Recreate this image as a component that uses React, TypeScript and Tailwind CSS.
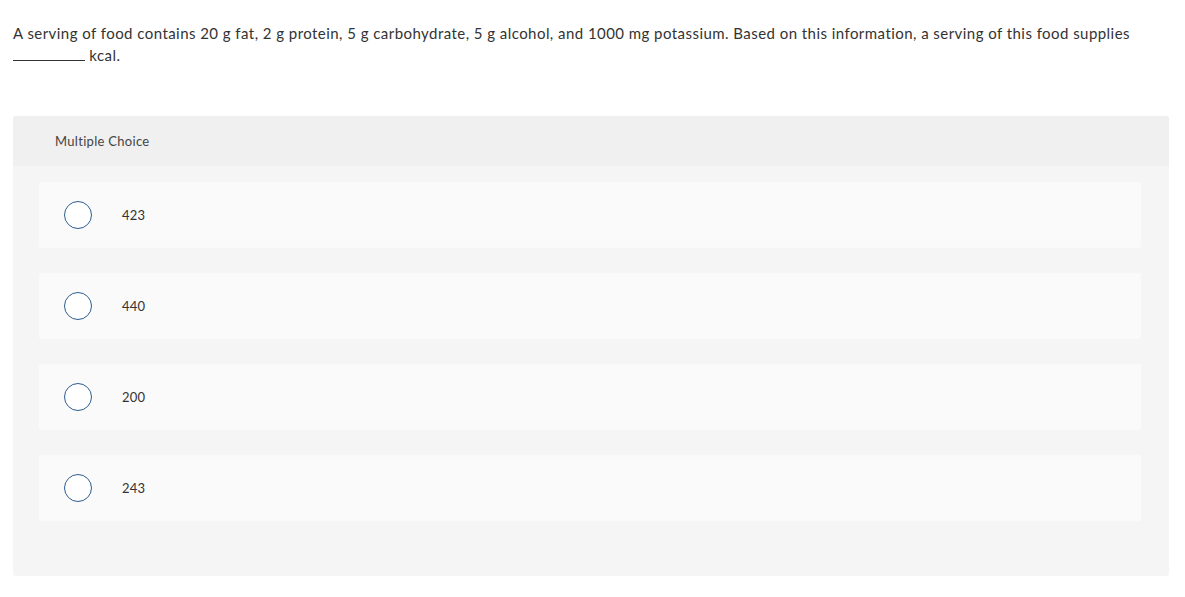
const choices = ['423', '440', '200', '243']

function ChoiceRow({ label }: { label: string }) {
  return (
    <div className="flex h-[66px] items-center rounded-[2px] bg-[#fafafa] pl-[25px]">
      <span className="h-[28px] w-[28px] shrink-0 rounded-full border-[1.5px] border-[#2d5d8f] bg-white" />
      <span className="ml-[30px] pt-[2px] text-[13px] tracking-[0.2px] text-[#333]">{label}</span>
    </div>
  )
}

export default function App() {
  return (
    <div className="min-h-[597px] bg-white px-[13px] pt-[22px] font-['Lato',sans-serif] text-[#333]">
      <p className="text-[15px] leading-[22px] tracking-[0.45px]">
        A serving of food contains 20 g fat, 2 g protein, 5 g carbohydrate, 5 g alcohol, and 1000 mg potassium. Based on this information, a serving of this food supplies{' '}
        <span className="inline-block w-[72px] border-b border-[#333] align-baseline" /> kcal.
      </p>

      <section className="mt-[50px] w-[1156px] overflow-hidden rounded-[3px] bg-[#f5f5f5]">
        <header className="flex h-[50px] items-center bg-[#f0f0f0] pl-[42px] pt-[2px] text-[13px] tracking-[0.3px] text-[#444]">
          Multiple Choice
        </header>
        <div className="flex flex-col gap-[25px] pb-[55px] pl-[26px] pr-[28px] pt-[16px]">
          {choices.map((c) => (
            <ChoiceRow key={c} label={c} />
          ))}
        </div>
      </section>
    </div>
  )
}
